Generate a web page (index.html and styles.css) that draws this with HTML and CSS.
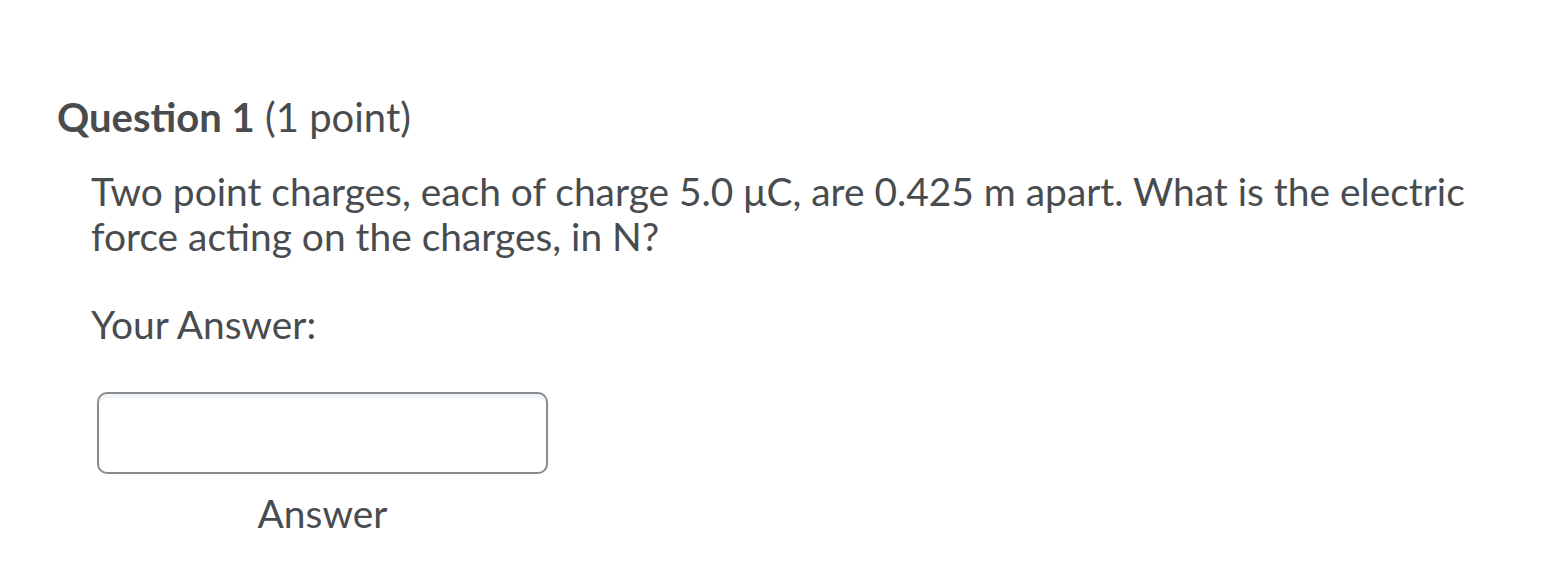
FILE: index.html
```html
<!DOCTYPE html>
<html>
<head>
<meta charset="utf-8">
<link rel="stylesheet" href="styles.css">
</head>
<body>
<div class="page">
  <h2 class="q-title"><strong>Question 1</strong> <span class="pts">(1 point)</span></h2>
  <div class="q-body">
    <p class="q-text">Two point charges, each of charge 5.0 μC, are 0.425 m apart. What is the electric force acting on the charges, in N?</p>
    <p class="q-label">Your Answer:</p>
    <div class="answer">
      <input class="answer-input" type="text" aria-label="Answer">
      <span class="answer-label">Answer</span>
    </div>
  </div>
</div>
</body>
</html>
```
FILE: styles.css
```css
html, body {
  margin: 0;
  padding: 0;
  background: #ffffff;
}
body {
  font-family: Lato, "Open Sans", sans-serif;
  color: #494c4e;
}
.page {
  padding: 93px 0 0 57px;
}
.q-title {
  margin: 0;
  font-size: 40px;
  line-height: 48px;
  font-weight: 400;
}
.q-title strong {
  font-weight: 700;
}
.q-body {
  padding-left: 34px;
  padding-top: 28px;
}
.q-text {
  margin: 0;
  font-size: 38.9px;
  line-height: 45px;
  width: 1440px;
}
.q-label {
  margin: 43px 0 0 0;
  font-size: 38.9px;
  line-height: 45px;
}
.answer {
  display: flex;
  flex-direction: column;
  align-items: center;
  width: 451px;
  margin: 45px 0 0 6px;
}
.answer-input {
  box-sizing: border-box;
  width: 451px;
  height: 82px;
  border: 2px solid #868c8f;
  border-radius: 10px;
  box-shadow: inset 0 4px 0 0 #f1f3f4;
  background: #fff;
  margin: 0;
  padding: 0;
}
.answer-label {
  margin-top: 17px;
  font-size: 38.9px;
  line-height: 45px;
}
```
